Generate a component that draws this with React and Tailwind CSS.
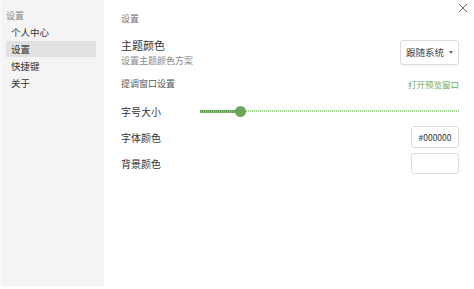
import React from "react";

const font = { fontFamily: '"Noto Sans CJK SC", "Noto Sans", sans-serif' };

export default function App() {
  return (
    <div className="w-[474px] h-[289px] bg-white flex relative overflow-hidden" style={font}>
      <aside className="w-[104px] h-[286px] bg-[#f4f4f4] border-l-2 border-[#f8f8f8] pt-[9px] flex flex-col">
        <div className="text-[9px] leading-[14px] text-[#8a8a8a] pl-[4px]">设置</div>
        <div className="mt-[1px] pl-[9px] text-[9.5px] leading-[16px] h-[16px] text-[#333]">个人中心</div>
        <div className="mt-[1px] mx-[4px] w-[90px] pl-[5px] text-[9.5px] leading-[16px] h-[16px] bg-[#e1e1e1] text-[#333]">设置</div>
        <div className="mt-[1px] pl-[9px] text-[9.5px] leading-[16px] h-[16px] text-[#333]">快捷键</div>
        <div className="mt-[1px] pl-[9px] text-[9.5px] leading-[16px] h-[16px] text-[#333]">关于</div>
      </aside>
      <main className="flex-1 pl-[17px] pr-[15px] pt-[12px] flex flex-col">
        <div className="text-[9px] leading-[14px] text-[#777]">设置</div>
        <div className="mt-[12px] flex items-center justify-between">
          <div className="flex flex-col">
            <div className="text-[11px] leading-[15px] text-[#333]">主题颜色</div>
            <div className="mt-[1px] text-[9px] leading-[13px] text-[#888]">设置主题颜色方案</div>
          </div>
          <div className="w-[59px] h-[25px] border border-[#dcdcdc] rounded-[3px] flex items-center justify-center gap-[5px] text-[9.5px] text-[#444] shadow-[0_1px_1px_rgba(0,0,0,0.04)]">
            <span>跟随系统</span>
            <span className="w-0 h-0 border-l-[2.5px] border-r-[2.5px] border-t-[3px] border-l-transparent border-r-transparent border-t-[#666]" />
          </div>
        </div>
        <div className="mt-[10px] flex items-center justify-between">
          <div className="text-[9px] leading-[14px] text-[#555]">提调窗口设置</div>
          <div className="text-[8.5px] leading-[14px] text-[#6fae5a]">打开预览窗口</div>
        </div>
        <div className="mt-[10px] flex items-center h-[20px]">
          <div className="w-[79px] text-[10px] text-[#333]">字号大小</div>
          <div className="flex-1 relative h-[12px] flex items-center">
            <div className="absolute left-0 w-[40px] h-[3px] bg-[repeating-linear-gradient(90deg,#5f9e4c_0_1px,#8cc07a_1px_2px)]" />
            <div className="absolute left-[40px] right-0 h-[2px] bg-[repeating-linear-gradient(90deg,#9fcf8f_0_1px,transparent_1px_2px)]" />
            <div className="absolute left-[35px] w-[11px] h-[11px] rounded-full bg-[#6aa659]" />
          </div>
        </div>
        <div className="mt-[5px] flex items-center justify-between h-[22px]">
          <div className="text-[10px] text-[#333]">字体颜色</div>
          <div className="w-[48px] h-[22px] border border-[#dcdcdc] rounded-[3px] flex items-center justify-center text-[8.5px] text-[#333]">#000000</div>
        </div>
        <div className="mt-[5px] flex items-center justify-between h-[21px]">
          <div className="text-[10px] text-[#333]">背景颜色</div>
          <div className="w-[48px] h-[21px] border border-[#dcdcdc] rounded-[3px]" />
        </div>
      </main>
      <svg className="absolute right-[6px] top-[3px]" width="10" height="10" viewBox="0 0 10 10">
        <path d="M1 1 L9 9 M9 1 L1 9" stroke="#666" strokeWidth="1" />
      </svg>
    </div>
  );
}
